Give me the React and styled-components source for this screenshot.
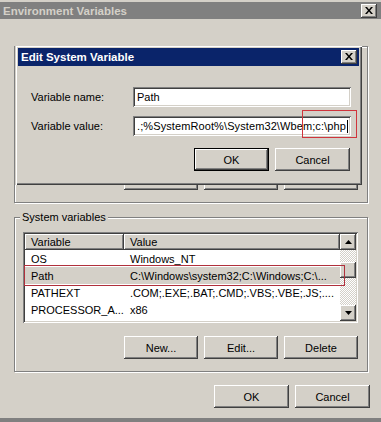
import React from "react";
import styled, { createGlobalStyle, css } from "styled-components";

const GlobalStyle = createGlobalStyle`
  html, body {
    margin: 0;
    padding: 0;
    background: #d4d0c8;
  }
  body {
    font-family: "Liberation Sans", Arial, sans-serif;
    font-size: 11px;
    color: #000;
  }
  * {
    box-sizing: border-box;
  }
`;

const raised = css`
  background: #d4d0c8;
  box-shadow: inset -1px -1px #404040, inset 1px 1px #fff,
    inset -2px -2px #808080, inset 2px 2px #d4d0c8;
`;

const sunken = css`
  box-shadow: inset 1px 1px #808080, inset -1px -1px #fff,
    inset 2px 2px #404040, inset -2px -2px #d4d0c8;
`;

const Window = styled.div`
  position: relative;
  width: 381px;
  height: 422px;
  overflow: hidden;
  background: #d4d0c8;
  display: flex;
  flex-direction: column;
  border-bottom: 4px solid #808080;
`;

const TitleBar = styled.div`
  margin-top: 2px;
  height: 17px;
  flex-shrink: 0;
  display: flex;
  align-items: center;
  justify-content: space-between;
  padding: 0 4px 0 3px;
  background: ${(p) => (p.$active ? "#0a246a" : "#808080")};
  color: ${(p) => (p.$active ? "#fff" : "#d4d0c8")};
  font-weight: bold;
  font-size: 11.5px;
`;

const CloseButton = styled.div`
  ${raised};
  width: 16px;
  height: 14px;
  display: flex;
  align-items: center;
  justify-content: center;
  padding-bottom: 1px;
`;

const Group = styled.div`
  position: relative;
  margin: ${(p) => p.$top}px 13px 0 14px;
  height: ${(p) => p.$height}px;
  flex-shrink: 0;
  border: 1px solid #808080;
  box-shadow: inset 1px 1px #fff, 1px 1px #fff;
  display: flex;
  flex-direction: column;
  justify-content: flex-end;
  padding: 14px 9px 12px 8px;
`;

const Legend = styled.span`
  position: absolute;
  top: -8px;
  left: 5px;
  padding: 0 2px;
  background: #d4d0c8;
  line-height: 14px;
`;

const ButtonRow = styled.div`
  display: flex;
  justify-content: flex-end;
  gap: 6px;
  margin-top: ${(p) => p.$top || 0}px;
  padding-right: ${(p) => p.$right || 0}px;
`;

const Button = styled.div`
  ${raised};
  width: ${(p) => p.$width || 75}px;
  height: 23px;
  display: flex;
  align-items: center;
  justify-content: center;
  ${(p) =>
    p.$default &&
    css`
      border: 1px solid #000;
    `}
`;

const ListView = styled.div`
  ${sunken};
  background: #fff;
  height: 91px;
  padding: 2px;
  display: grid;
  grid-template-columns: 1fr 16px;
`;

const Table = styled.div`
  display: flex;
  flex-direction: column;
  overflow: hidden;
`;

const Row = styled.div`
  display: grid;
  grid-template-columns: 99px 1fr;
  height: ${(p) => (p.$header ? 16 : 17)}px;
  background: ${(p) => (p.$selected ? "#d4d0c8" : "transparent")};
  white-space: nowrap;
`;

const Cell = styled.div`
  padding-left: 6px;
  display: flex;
  align-items: center;
  overflow: hidden;
`;

const HeadCell = styled(Cell)`
  background: #d4d0c8;
  box-shadow: inset -1px -1px #404040, inset 1px 1px #fff,
    inset -2px -2px #808080;
`;

const ScrollBar = styled.div`
  display: flex;
  flex-direction: column;
`;

const ScrollButton = styled.div`
  ${raised};
  height: 16px;
  display: flex;
  align-items: center;
  justify-content: center;
`;

const Track = styled.div`
  flex: 1;
  padding-top: 12px;
  background: repeating-conic-gradient(#d4d0c8 0 25%, #fff 0 50%) 0 0 / 2px
    2px;
`;

const Thumb = styled.div`
  ${raised};
  height: 16px;
`;

const Dialog = styled.div`
  position: absolute;
  left: 15px;
  top: 45px;
  width: 347px;
  height: 140px;
  background: #d4d0c8;
  padding: 3px;
  box-shadow: inset 1px 1px #d4d0c8, inset 2px 2px #fff,
    inset -1px -1px #404040, inset -2px -2px #808080;
  display: flex;
  flex-direction: column;
`;

const DialogTitle = styled(TitleBar)`
  margin-top: 0;
  height: 18px;
  padding-right: 2px;
`;

const DialogBody = styled.div`
  padding: 21px 9px 0 13px;
`;

const Form = styled.div`
  display: grid;
  grid-template-columns: 102px 1fr;
  row-gap: 9px;
  align-items: center;
`;

const Input = styled.div`
  ${sunken};
  background: #fff;
  height: 20px;
  padding: 0 3px 0 4px;
  display: flex;
  align-items: center;
  white-space: nowrap;
  letter-spacing: ${(p) => (p.$wide ? "0.1px" : "0")};
`;

const Caret = styled.span`
  width: 1px;
  height: 13px;
  margin-left: 1px;
  background: #000;
  flex-shrink: 0;
`;

const Spacer = styled.div`
  flex: 1;
`;

const Mark = styled.div`
  position: absolute;
  left: ${(p) => p.$x}px;
  top: ${(p) => p.$y}px;
  width: ${(p) => p.$w}px;
  height: ${(p) => p.$h}px;
  border: 1px solid ${(p) => p.$color};
  pointer-events: none;
`;

const XGlyph = () => (
  <svg width="8" height="7" viewBox="0 0 8 7">
    <path
      d="M0 0h2l2 2.5 2-2.5h2L5 3.5 8 7H6L4 4.5 2 7H0l3-3.5z"
      fill="#000"
    />
  </svg>
);

const Arrow = ({ down }) => (
  <svg width="7" height="4" viewBox="0 0 7 4">
    <polygon points={down ? "0,0 7,0 3.5,4" : "3.5,0 7,4 0,4"} fill="#000" />
  </svg>
);

const rows = [
  ["OS", "Windows_NT"],
  ["Path", "C:\\Windows\\system32;C:\\Windows;C:\\..."],
  ["PATHEXT", ".COM;.EXE;.BAT;.CMD;.VBS;.VBE;.JS;...."],
  ["PROCESSOR_A...", "x86"],
];

const App = () => (
  <>
    <GlobalStyle />
    <Window>
      <TitleBar>
        <span>Environment Variables</span>
        <CloseButton>
          <XGlyph />
        </CloseButton>
      </TitleBar>

      <Group $top={27} $height={157}>
        <ButtonRow>
          <Button $width={74}>New...</Button>
          <Button $width={74}>Edit...</Button>
          <Button $width={74}>Delete</Button>
        </ButtonRow>
      </Group>

      <Group $top={14} $height={155}>
        <Legend>System variables</Legend>
        <ListView>
          <Table>
            <Row $header>
              <HeadCell>Variable</HeadCell>
              <HeadCell>Value</HeadCell>
            </Row>
            {rows.map(([name, value]) => (
              <Row key={name} $selected={name === "Path"}>
                <Cell>{name}</Cell>
                <Cell>{value}</Cell>
              </Row>
            ))}
          </Table>
          <ScrollBar>
            <ScrollButton>
              <Arrow />
            </ScrollButton>
            <Track>
              <Thumb />
            </Track>
            <ScrollButton>
              <Arrow down />
            </ScrollButton>
          </ScrollBar>
        </ListView>
        <ButtonRow $top={13}>
          <Button $width={74}>New...</Button>
          <Button $width={74}>Edit...</Button>
          <Button $width={74}>Delete</Button>
        </ButtonRow>
      </Group>

      <ButtonRow $top={13} $right={11}>
        <Button>OK</Button>
        <Button>Cancel</Button>
      </ButtonRow>
      <Spacer />

      <Dialog>
        <DialogTitle $active>
          <span>Edit System Variable</span>
          <CloseButton>
            <XGlyph />
          </CloseButton>
        </DialogTitle>
        <DialogBody>
          <Form>
            <span>Variable name:</span>
            <Input>Path</Input>
            <span>Variable value:</span>
            <Input $wide>
              <span>.;%SystemRoot%\System32\Wbem;c:\php</span>
              <Caret />
            </Input>
          </Form>
          <ButtonRow $top={12}>
            <Button $default>OK</Button>
            <Button>Cancel</Button>
          </ButtonRow>
        </DialogBody>
      </Dialog>

      <Mark $x={302} $y={110} $w={55} $h={28} $color="#d0343c" />
      <Mark $x={24} $y={265} $w={321} $h={21} $color="#b0303c" />
    </Window>
  </>
);

export default App;
